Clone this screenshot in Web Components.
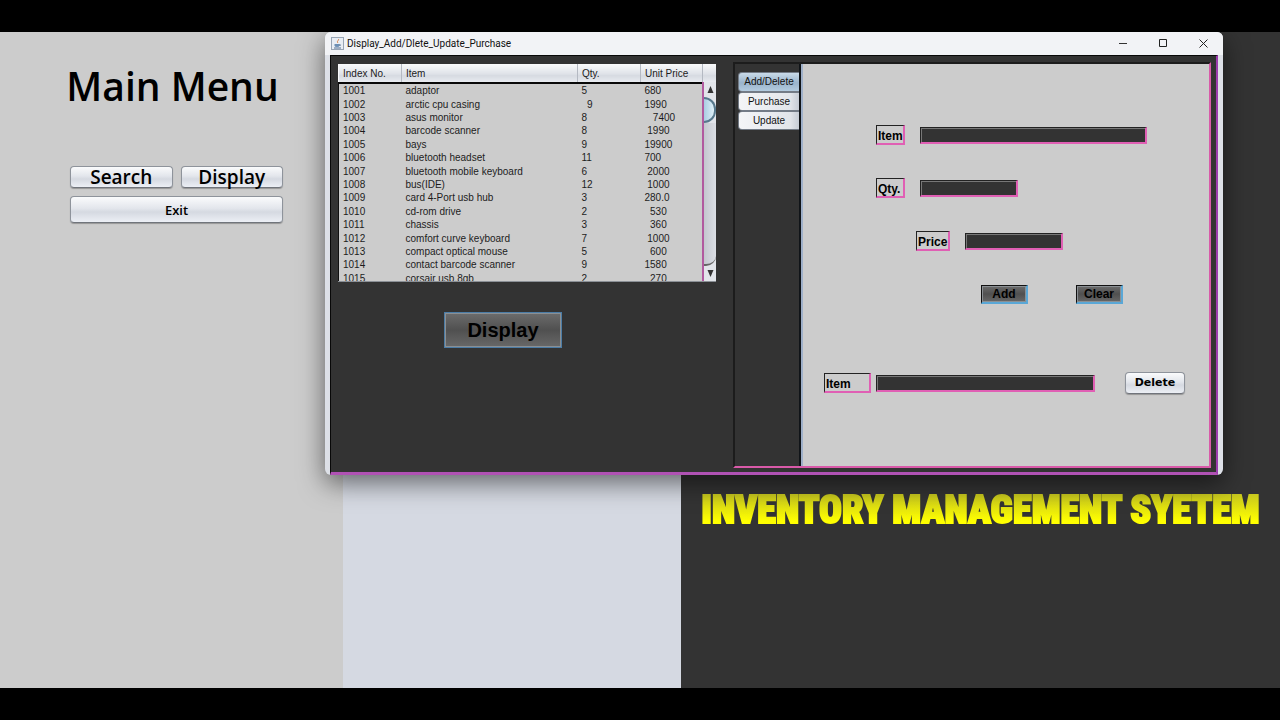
<!DOCTYPE html>
<html lang="en">
<head>
<meta charset="utf-8">
<title>Inventory Management</title>
<style>
  html, body { height: 100%; }
  body { margin: 0; background: #000; color: #000; font-family: "Liberation Sans", Arial, sans-serif; }
</style>
</head>
<body>
<inventory-desktop>
  <main-menu slot="menu"></main-menu>
  <app-banner slot="banner">INVENTORY MANAGEMENT SYETEM</app-banner>
  <app-window slot="window" caption="Display_Add/Dlete_Update_Purchase">
    <stock-list slot="list"></stock-list>
    <stock-tabs slot="tabs"><stock-form></stock-form></stock-tabs>
  </app-window>
</inventory-desktop>

<script>
const define = (name, html, setup) => customElements.define(name, class extends HTMLElement {
  constructor() {
    super();
    const t = document.createElement('template');
    t.innerHTML = html;
    this.attachShadow({ mode: 'open' }).append(t.content.cloneNode(true));
  }
  connectedCallback() { if (setup) setup(this, this.shadowRoot); }
});

define('inventory-desktop', `
  <style>
    :host { display: block; box-sizing: border-box; min-height: 100vh; padding: 32px 0; background: #000; }
    .desk { position: relative; display: grid; grid-template-columns: minmax(0, 343fr) minmax(0, 338fr) minmax(0, 599fr); min-height: calc(100vh - 64px); overflow: hidden; }
    .left { background: #ccc; }
    .mid { background: #d5d9e2; }
    .right { background: #333; padding-top: 456px; }
    ::slotted([slot=window]) { position: absolute; left: 325px; right: 57px; top: 0; }
  </style>
  <div class="desk">
    <div class="left"><slot name="menu"></slot></div>
    <div class="mid"></div>
    <div class="right"><slot name="banner"></slot></div>
    <slot name="window"></slot>
  </div>`);

define('nimbus-button', `
  <style>
    :host { display: block; }
    button { display: block; box-sizing: border-box; width: 100%; height: 100%; padding: 0; margin: 0; border: 1px solid #8e939b; border-bottom-color: #70747b; border-radius: 4px;
      background: linear-gradient(#fafbfc, #e3e6ec 45%, #d5d9e1 60%, #eceff5); box-shadow: 0 1px 1px #0004; color: #000; font: inherit; white-space: nowrap; }
  </style>
  <button type="button"><slot></slot></button>`);

define('main-menu', `
  <style>
    :host { display: block; padding: 28px 0 0 70px; font-family: "Open Sans", "Noto Sans", sans-serif; font-weight: 600; }
    h1 { margin: 0 0 54px; width: 205px; font-size: 39px; line-height: 52px; font-weight: 600; white-space: nowrap; display: flex; justify-content: center; }
    nav { display: grid; grid-template-columns: 1fr 1fr; gap: 8px; width: 213px; }
    nimbus-button { height: 22px; font-size: 19px; line-height: 18px; }
    .wide { grid-column: 1 / -1; height: 27px; font-size: 13px; }
  </style>
  <h1>Main Menu</h1>
  <nav>
    <nimbus-button>Search</nimbus-button>
    <nimbus-button>Display</nimbus-button>
    <nimbus-button class="wide">Exit</nimbus-button>
  </nav>`);

define('app-banner', `
  <style>
    :host { display: flex; justify-content: center; }
    h2 { margin: 0; padding: 0 2px; font: 900 38px/44px "Roboto Condensed", Impact, sans-serif; white-space: nowrap; color: transparent;
      -webkit-text-stroke: 2px transparent;
      background: linear-gradient(#c8c81e 15%, #ff0 75%); -webkit-background-clip: text; background-clip: text; }
  </style>
  <h2><slot></slot></h2>`);

define('app-window', `
  <style>
    :host { display: block; border-radius: 6px; background: #dde0e7; box-shadow: 0 8px 26px #0008; overflow: hidden; }
    header { display: flex; align-items: center; height: 23px; padding-left: 6px; background: #f2f3f6; }
    h2 { margin: 0 auto 0 3px; font: 400 10px/14px "Roboto", "Noto Sans", sans-serif; color: #111; white-space: nowrap; }
    header button { width: 40px; height: 23px; padding: 0; border: 0; background: none; display: grid; place-items: center; }
    .body { display: flex; align-items: flex-start; gap: 17px; margin: 0 5px; padding: 6px 5px 4px 7px; background: #333; border: solid; border-width: 1px 2px 3px 1px; border-color: #080808 #9c3cae #b052b4 #080808; }
    slot[name=list] { display: block; }
    slot[name=tabs] { display: block; flex: 1; }
  </style>
  <header>
    <svg width="13" height="13" viewBox="0 0 13 13" aria-hidden="true">
      <rect x=".5" y=".5" width="12" height="12" fill="#e8edf4" stroke="#98a5b5"/>
      <path d="M7 2c2 1-2 2 0 4" stroke="#d67b3d" fill="none"/>
      <path d="M3.5 7h5v1.500q0 1.500-2.500 1.500t-2.500-1.500z" fill="#6d8fb4"/>
      <path d="M8.500 7.500q2 0 0 1.500M3 11h7" stroke="#526f92" fill="none"/>
    </svg>
    <h2></h2>
    <button type="button" aria-label="Minimize"><svg width="9" height="9"><path d="M0 4.500h8" stroke="#333"/></svg></button>
    <button type="button" aria-label="Maximize"><svg width="9" height="9"><path d="M.5.5h7v7h-7z" fill="none" stroke="#222"/></svg></button>
    <button type="button" aria-label="Close"><svg width="9" height="9"><path d="M.5.5l8 8M8.500.5l-8 8" stroke="#222"/></svg></button>
  </header>
  <div class="body"><slot name="list"></slot><slot name="tabs"></slot></div>`,
  (host, root) => { root.querySelector('h2').textContent = host.getAttribute('caption'); });

define('etched-button', `
  <style>
    :host { display: block; }
    button { display: block; box-sizing: border-box; width: 100%; height: 100%; padding: 1px 0 0; border: solid; border-width: var(--edge, 1px 2px 2px 1px); border-color: var(--rim, #111 #5aa7d6 #5aa7d6 #111);
      background: linear-gradient(#6c6c6c, #505050 50%, #686868); box-shadow: inset 0 0 0 1px #8a8f93; color: #000; font: inherit; }
  </style>
  <button type="button"><slot></slot></button>`);

define('stock-list', `
  <style>
    :host { display: block; padding-top: 2px; }
    .box { display: flex; width: 378px; height: 218px; box-sizing: border-box; border-bottom: 1px solid #8b9096; overflow: hidden; background: #ccc; }
    table { flex: 1; height: 221px; border-collapse: collapse; table-layout: fixed; font-size: 10px; line-height: 13px; color: #1c1c1c; }
    th { height: 18px; padding: 0 0 0 4px; font-weight: 400; text-align: left; border-bottom: 2px solid #080808; border-left: 1px solid #b4b9c2; background: linear-gradient(#f9fafb, #dfe2e8 55%, #d6dae1 65%, #e8ebf0); white-space: nowrap; }
    th:first-child { border-left-color: #f9fafb; }
    td { padding: 0 0 0 4px; white-space: pre; }
    td:first-child { border-left: 1px solid #111; }
    .side { width: 14px; display: flex; flex-direction: column; }
    .cap { height: 18px; border-left: 1px solid #b4b9c2; background: linear-gradient(#f9fafb, #dfe2e8 55%, #d6dae1 65%, #e8ebf0); }
    .bar { flex: 1; display: flex; flex-direction: column; border-left: 2px solid #b15a9f; background: #e2e5ea; align-items: stretch; }
    .arrow { height: 15px; display: grid; place-items: center; }
    .thumb { box-sizing: border-box; height: 26px; border: 2px solid #56788c; border-left: 0; border-radius: 0 13px 13px 0; background: linear-gradient(90deg, #a9cde2, #dff0f8); }
    .track { flex: 1; border-radius: 0 0 10px 0; background: linear-gradient(90deg, #c3c7ce, #dcdfe5); border-bottom: 2px solid #666; }
    .display { width: 118px; height: 36px; margin: 30px 0 0 106px; font-size: 20px; font-weight: 700; --edge: 1px; --rim: #4b7ca6; }
  </style>
  <div class="box">
    <table>
      <colgroup><col style="width:63px"><col style="width:176px"><col style="width:63px"><col></colgroup>
      <thead><tr><th>Index No.</th><th>Item</th><th>Qty.</th><th>Unit Price</th></tr></thead>
      <tbody></tbody>
    </table>
    <div class="side">
      <div class="cap"></div>
      <div class="bar">
        <div class="arrow"><svg width="7" height="7"><path d="M3.500 0l3 7h-6z" fill="#333"/></svg></div>
        <div class="thumb"></div>
        <div class="track"></div>
        <div class="arrow"><svg width="7" height="7"><path d="M3.500 7l3-7h-6z" fill="#333"/></svg></div>
      </div>
    </div>
  </div>
  <etched-button class="display">Display</etched-button>`,
  (host, root) => {
    const rows = [
      ['adaptor', '5', '680'], ['arctic cpu casing', '  9', '1990'], ['asus monitor', '8', '   7400'],
      ['barcode scanner', '8', ' 1990'], ['bays', '9', '19900'], ['bluetooth headset', '11', '700'],
      ['bluetooth mobile keyboard', '6', ' 2000'], ['bus(IDE)', '12', ' 1000'], ['card 4-Port usb hub', '3', '280.0'],
      ['cd-rom drive', '2', '  530'], ['chassis', '3', '  360'], ['comfort curve keyboard', '7', ' 1000'],
      ['compact optical mouse', '5', '  600'], ['contact barcode scanner', '9', '1580'], ['corsair usb.8gb', '2', '  270']
    ];
    const body = root.querySelector('tbody');
    rows.forEach((r, i) => {
      const tr = body.insertRow();
      [String(1001 + i), ...r].forEach(v => { tr.insertCell().textContent = v; });
    });
  });

define('stock-tabs', `
  <style>
    :host { display: flex; border: 2px solid; border-color: #1c1c1c #d95aa9 #d95aa9 #1c1c1c; }
    .tabs { width: 66px; padding: 8px 2px 0 3px; box-sizing: border-box; display: flex; flex-direction: column; }
    .tabs button { height: 19px; padding: 0; border: 1px solid #737b86; border-right: 0; border-radius: 4px 0 0 4px; background: linear-gradient(90deg, #f4f5f7, #e2e5ea 85%, #c6ccd5); font: 10px/14px "Liberation Sans", Arial, sans-serif; color: #111; }
    .tabs button[aria-selected=true] { height: 20px; background: linear-gradient(#c9dae8, #9ab4cc 55%, #b3cbdf); }
    .page { flex: 1; min-width: 0; border-left: 2px solid #9fb0c9; background: #ccc; box-shadow: -2px 0 #101418; }
  </style>
  <div class="tabs" role="tablist">
    <button type="button" role="tab" aria-selected="true">Add/Delete</button>
    <button type="button" role="tab" aria-selected="false">Purchase</button>
    <button type="button" role="tab" aria-selected="false">Update</button>
  </div>
  <div class="page" role="tabpanel"><slot></slot></div>`);

define('etched-field', `
  <style>
    :host { display: flex; align-items: center; gap: var(--gap, 15px); }
    label, input { box-sizing: border-box; border: solid; border-width: 1px 2px 2px 1px; border-color: #222 #e05fb4 #e05fb4 #222; }
    label { height: 20px; width: var(--label, 29px); padding-left: 1px; font-size: 12px; line-height: 20px; font-weight: 700; white-space: nowrap; }
    input { height: 17px; width: var(--input); padding: 0 2px; background: #333; color: #ddd; box-shadow: inset 1px 1px #777; outline: 0; font-size: 11px; }
  </style>
  <label for="value"></label><input id="value" type="text">`,
  (host, root) => { root.querySelector('label').textContent = host.getAttribute('label'); });

define('stock-form', `
  <style>
    :host { display: flex; flex-direction: column; gap: 33px; padding: 61px 0 73px; }
    .row { display: flex; align-items: center; height: 20px; }
    .item, .qty { padding-left: 73px; }
    .item { --input: 227px; }
    .qty { --input: 98px; }
    .price { padding-left: 113px; --label: 34px; --input: 98px; }
    .actions { padding-left: 178px; gap: 48px; }
    .actions etched-button { width: 47px; height: 19px; font-size: 12px; font-weight: 700; }
    .remove { padding: 36px 0 0 21px; --label: 47px; --input: 219px; --gap: 5px; gap: 30px; }
    .remove nimbus-button { width: 60px; height: 22px; font: 700 11px/14px "DejaVu Sans", Verdana, sans-serif; }
  </style>
  <div class="row item"><etched-field label="Item"></etched-field></div>
  <div class="row qty"><etched-field label="Qty."></etched-field></div>
  <div class="row price"><etched-field label="Price"></etched-field></div>
  <div class="row actions"><etched-button>Add</etched-button><etched-button>Clear</etched-button></div>
  <div class="row remove"><etched-field label="Item"></etched-field><nimbus-button>Delete</nimbus-button></div>`);
</script>
</body>
</html>
